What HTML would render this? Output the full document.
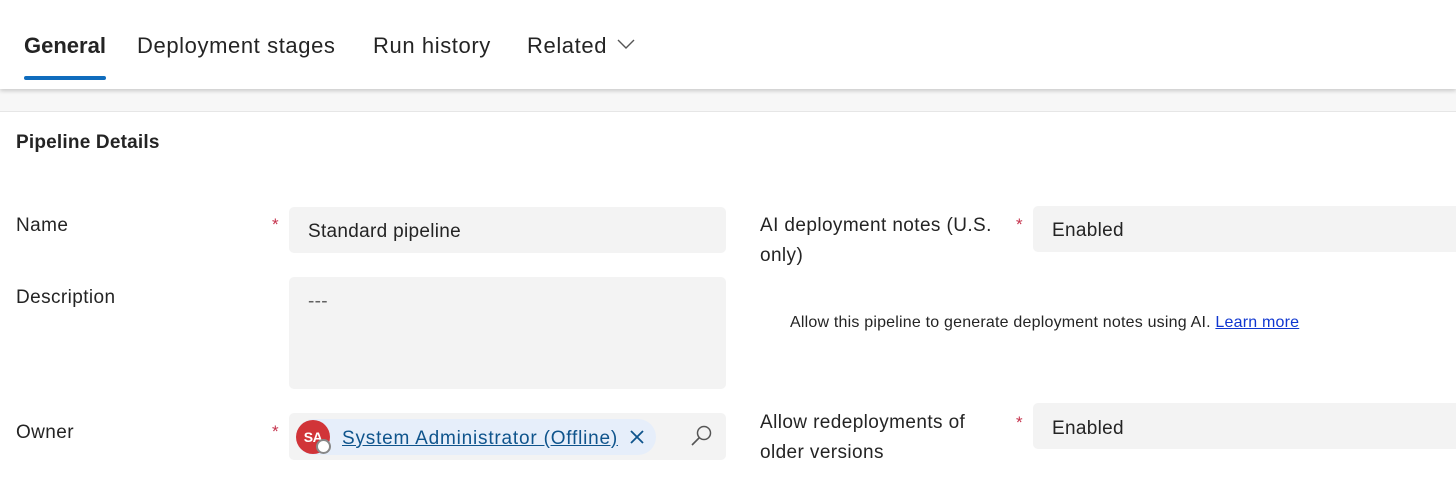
<!DOCTYPE html>
<html><head><style>
*{margin:0;padding:0;box-sizing:border-box}
body{width:1456px;height:484px;overflow:hidden;background:#fff;font-family:"Liberation Sans",sans-serif;color:#242424;position:relative}
.a{position:absolute;white-space:nowrap}
.tab{font-size:22px;top:33px;color:#242424;letter-spacing:0.6px}
.box{position:absolute;background:#f3f3f3;border-radius:5px}
.lbl{font-size:19px;color:#242424;letter-spacing:0.4px}
.req{color:#c4314b;font-size:17px}
.val{font-size:19px;color:#242424;letter-spacing:0.3px}
</style></head><body>
<div class="a" style="left:0;top:0;width:1456px;height:89px;background:#fff;box-shadow:0 2px 4px rgba(0,0,0,.18);z-index:2"></div>
<div class="a" style="left:0;top:89px;width:1456px;height:23px;background:#f7f7f7;border-bottom:1px solid #e6e6e6"></div>
<div class="a tab" style="left:24px;font-weight:bold;z-index:3;letter-spacing:0">General</div>
<div class="a tab" style="left:137px;z-index:3">Deployment stages</div>
<div class="a tab" style="left:373px;z-index:3">Run history</div>
<div class="a tab" style="left:527px;z-index:3">Related</div>
<svg class="a" style="left:617px;top:38px;z-index:3" width="18" height="12"><path d="M1 2 L9 10 L17 2" fill="none" stroke="#555" stroke-width="1.4"/></svg>
<div class="a" style="left:24px;top:76px;width:82px;height:4px;background:#0f6cbd;border-radius:2px;z-index:3"></div>
<div class="a" style="left:16px;top:132px;font-size:19px;font-weight:bold;color:#242424;letter-spacing:0.2px">Pipeline Details</div>

<div class="a lbl" style="left:16px;top:215px">Name</div>
<div class="a req" style="left:272px;top:215px">*</div>
<div class="box" style="left:289px;top:207px;width:437px;height:46px"></div>
<div class="a val" style="left:308px;top:221px">Standard pipeline</div>

<div class="a lbl" style="left:16px;top:287px">Description</div>
<div class="box" style="left:289px;top:277px;width:437px;height:112px"></div>
<div class="a val" style="left:308px;top:291px;color:#616161">---</div>

<div class="a lbl" style="left:16px;top:422px">Owner</div>
<div class="a req" style="left:272px;top:422px">*</div>
<div class="box" style="left:289px;top:413px;width:437px;height:47px"></div>
<div class="a" style="left:296px;top:419px;width:360px;height:36px;background:#e6eefa;border-radius:18px"></div>
<div class="a" style="left:296px;top:420px;width:34px;height:34px;border-radius:50%;background:#d13438;color:#fff;font-size:14px;font-weight:bold;text-align:center;line-height:34px;letter-spacing:-0.5px">SA</div>
<div class="a" style="left:316px;top:439px;width:15px;height:15px;border-radius:50%;background:#fff;border:2px solid #888"></div>
<div class="a" style="left:342px;top:428px;font-size:19px;color:#0f548c;text-decoration:underline;letter-spacing:0.8px">System Administrator (Offline)</div>
<svg class="a" style="left:630px;top:430px" width="14" height="14"><path d="M1 1L13 13M13 1L1 13" stroke="#0f548c" stroke-width="1.8"/></svg>
<svg class="a" style="left:690px;top:424px" width="24" height="24"><circle cx="14" cy="9" r="6.5" fill="none" stroke="#555" stroke-width="1.5"/><path d="M9.5 13.5L2 21" stroke="#555" stroke-width="1.6"/></svg>

<div class="a lbl" style="left:760px;top:211px;line-height:30px">AI deployment notes (U.S.<br>only)</div>
<div class="a req" style="left:1016px;top:215px">*</div>
<div class="box" style="left:1033px;top:206px;width:430px;height:46px"></div>
<div class="a val" style="left:1052px;top:220px">Enabled</div>
<div class="a" style="left:790px;top:314px;font-size:16px;color:#242424;letter-spacing:0.2px">Allow this pipeline to generate deployment notes using AI. <span style="color:#0f36d0;text-decoration:underline">Learn more</span></div>

<div class="a lbl" style="left:760px;top:408px;line-height:30px">Allow redeployments of<br>older versions</div>
<div class="a req" style="left:1016px;top:413px">*</div>
<div class="box" style="left:1033px;top:403px;width:430px;height:46px"></div>
<div class="a val" style="left:1052px;top:418px">Enabled</div>
</body></html>
